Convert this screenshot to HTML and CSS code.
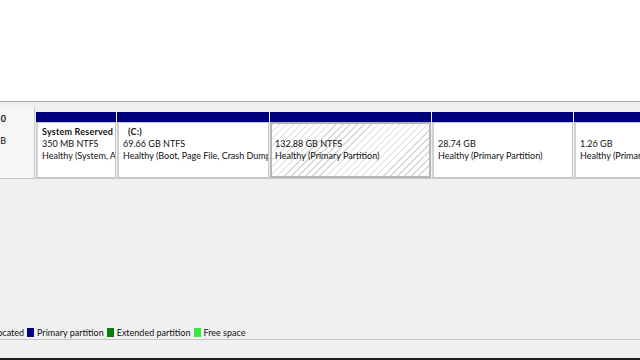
FILE: index.html
```html
<!DOCTYPE html>
<html>
<head>
  <title>Disk Management</title>
  <link rel="stylesheet" href="styles.css">
</head>
<body>
  <div class="volume-list"></div>

  <div class="disks">
    <div class="disk-row">
      <div class="disk-label">
        <div class="disk-info">
          <div class="disk-name">Disk 0</div>
          <div class="disk-size">465.76 GB</div>
        </div>
      </div>
      <div class="disk-map">
        <div class="part" style="width: 80px">
          <div class="part-head"></div>
          <div class="part-body">
            <div class="line bold">System Reserved</div>
            <div class="line">350 MB NTFS</div>
            <div class="line">Healthy (System, Active, Primary Partition)</div>
          </div>
        </div>
        <div class="part" style="width: 152px">
          <div class="part-head"></div>
          <div class="part-body">
            <div class="line bold indent">(C:)</div>
            <div class="line">69.66 GB NTFS</div>
            <div class="line">Healthy (Boot, Page File, Crash Dump, Primary Partition)</div>
          </div>
        </div>
        <div class="part selected" style="width: 161px">
          <div class="part-head"></div>
          <div class="part-body">
            <div class="line"></div>
            <div class="line">132.88 GB NTFS</div>
            <div class="line">Healthy (Primary Partition)</div>
          </div>
        </div>
        <div class="part" style="width: 141px">
          <div class="part-head"></div>
          <div class="part-body">
            <div class="line"></div>
            <div class="line">28.74 GB</div>
            <div class="line">Healthy (Primary Partition)</div>
          </div>
        </div>
        <div class="part" style="width: 100px">
          <div class="part-head"></div>
          <div class="part-body">
            <div class="line"></div>
            <div class="line">1.26 GB</div>
            <div class="line">Healthy (Primary Partition)</div>
          </div>
        </div>
      </div>
    </div>
  </div>

  <div class="legend">
    <div class="legend-items">
      <span class="legend-item first"><span class="key unallocated"></span>Unallocated</span>
      <span class="legend-item"><span class="key primary"></span>Primary partition</span>
      <span class="legend-item"><span class="key extended"></span>Extended partition</span>
      <span class="legend-item"><span class="key free"></span>Free space</span>
    </div>
  </div>

  <div class="status"></div>
  <div class="taskbar"></div>
</body>
</html>
```

FILE: styles.css
```css
body {
  margin: 0;
  height: 360px;
  overflow: hidden;
  background-color: #f0f0f0;
  font-family: Lato, "Noto Sans", sans-serif;
  font-size: 9px;
  color: #111;
}

.volume-list {
  height: 101px;
  background-color: #fff;
  border-bottom: 1px solid #a8a8a8;
}

.disks {
  height: 219px;
  padding-top: 5px;
  overflow: hidden;
}

.disk-row {
  display: flex;
  height: 71px;
  border-bottom: 1px solid #c8c8c8;
}

.disk-label {
  width: 34px;
  flex: none;
  overflow: hidden;
  background-color: #f6f6f6;
  border-right: 1px solid #c8c8c8;
}

.disk-info {
  width: 60px;
  margin-left: -54px;
  padding-top: 6px;
  text-align: right;
  line-height: 12px;
}

.disk-name {
  font-weight: bold;
}

.disk-size {
  margin-top: 10px;
}

.disk-map {
  display: flex;
  gap: 1px;
  padding: 5px 0 0 1px;
  overflow: hidden;
  flex: 1;
}

.part {
  flex: none;
  display: flex;
  flex-direction: column;
}

.part-head {
  height: 10px;
  background-color: #00007c;
}

.part-body {
  height: 51px;
  padding: 3px 0 0 4px;
  background-color: #fff;
  border: 1px solid #c4c4c4;
  border-left: 2px solid #d0d0d0;
  overflow: hidden;
  white-space: nowrap;
}

.part.selected .part-body {
  border: 2px solid #b6b6b6;
  padding: 2px 0 0 3px;
  background: repeating-linear-gradient(135deg, #d6d6d6 0 1px, #fff 1px 5px);
}

.line {
  height: 12px;
  line-height: 12px;
}

.bold {
  font-weight: bold;
  letter-spacing: 0.2px;
}

.indent {
  padding-left: 5px;
}

.legend {
  height: 13px;
  border-bottom: 1px solid #c4c4c4;
  overflow: hidden;
  white-space: nowrap;
}

.legend-items {
  display: flex;
  align-items: center;
  height: 13px;
}

.legend-item {
  display: flex;
  align-items: center;
  gap: 3px;
  margin-right: 3px;
  flex: none;
}

.legend-item.first {
  margin-left: -33px;
}

.key {
  width: 7px;
  height: 9px;
}

.unallocated {
  background-color: #000;
}

.primary {
  background-color: #000080;
}

.extended {
  background-color: #0b7d0b;
}

.free {
  background-color: #3ee43e;
}

.status {
  height: 18px;
}

.taskbar {
  height: 2px;
  background-color: #1c1c1c;
}
```
